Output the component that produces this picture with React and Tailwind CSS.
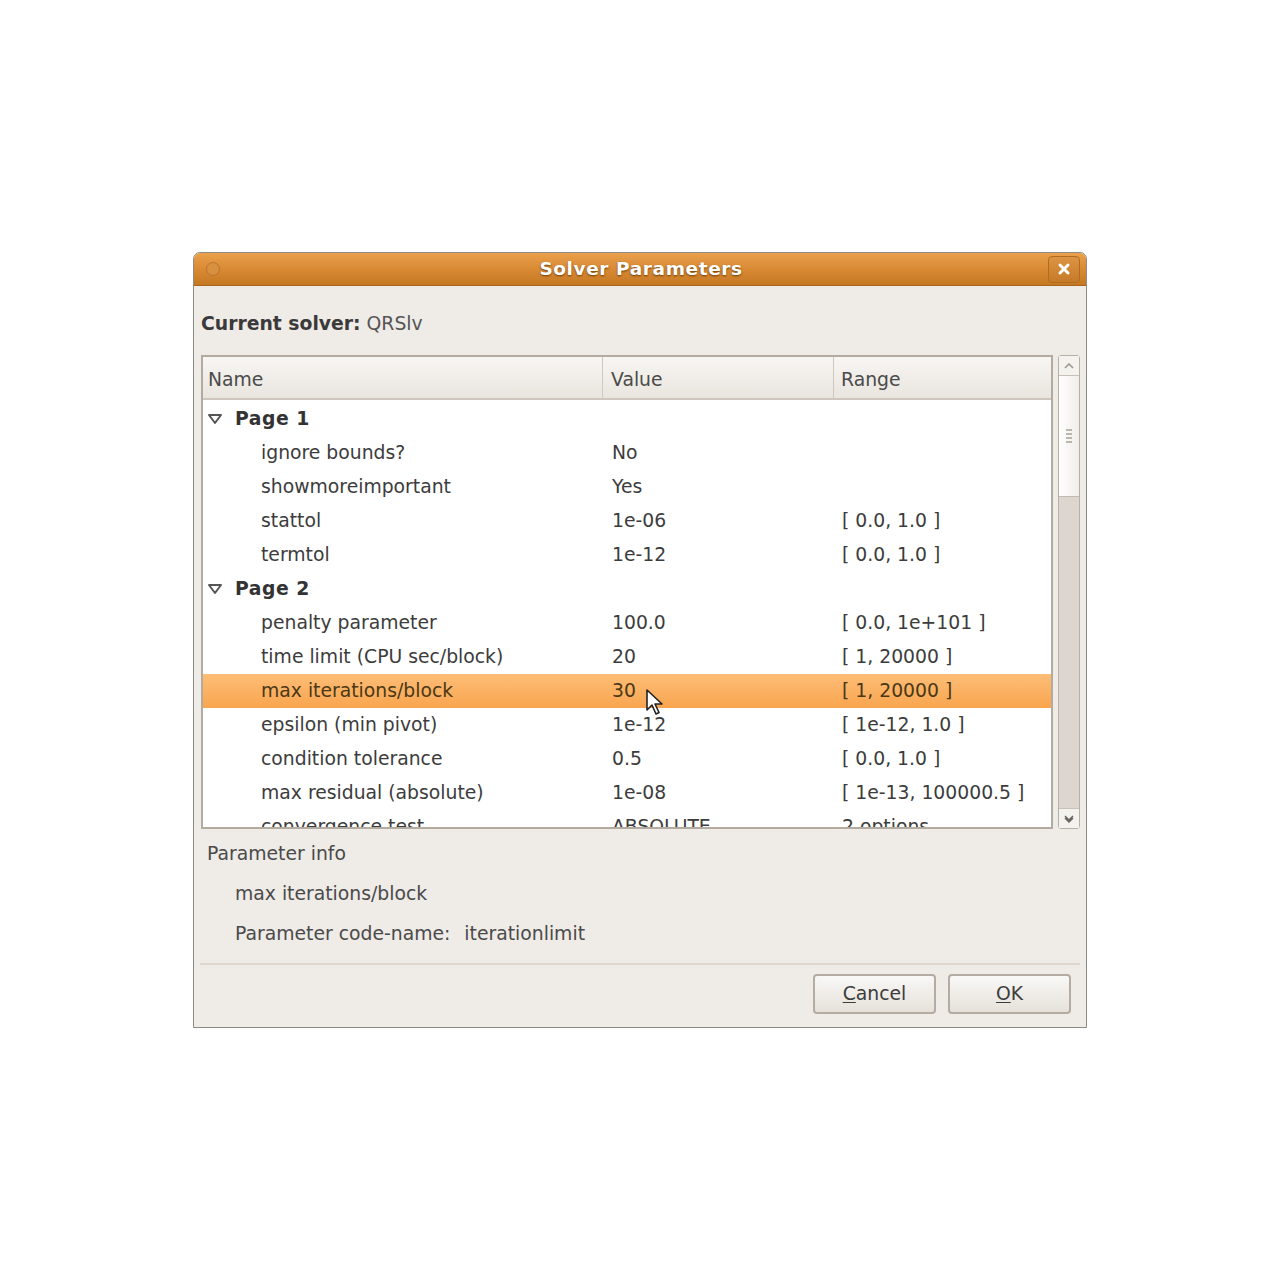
import React from "react";

const font = { fontFamily: '"DejaVu Sans", "Liberation Sans", sans-serif' };

const rows = [
  { group: "Page 1" },
  { name: "ignore bounds?", value: "No", range: "" },
  { name: "showmoreimportant", value: "Yes", range: "" },
  { name: "stattol", value: "1e-06", range: "[ 0.0, 1.0 ]" },
  { name: "termtol", value: "1e-12", range: "[ 0.0, 1.0 ]" },
  { group: "Page 2" },
  { name: "penalty parameter", value: "100.0", range: "[ 0.0, 1e+101 ]" },
  { name: "time limit (CPU sec/block)", value: "20", range: "[ 1, 20000 ]" },
  { name: "max iterations/block", value: "30", range: "[ 1, 20000 ]", selected: true },
  { name: "epsilon (min pivot)", value: "1e-12", range: "[ 1e-12, 1.0 ]" },
  { name: "condition tolerance", value: "0.5", range: "[ 0.0, 1.0 ]" },
  { name: "max residual (absolute)", value: "1e-08", range: "[ 1e-13, 100000.5 ]" },
  { name: "convergence test", value: "ABSOLUTE", range: "2 options" },
];

const Triangle = () => (
  <svg width="16" height="12" viewBox="0 0 16 12" className="mr-[12px]">
    <path d="M2 2 L14 2 L8 10 Z" fill="none" stroke="#555" strokeWidth="2" strokeLinejoin="round" />
  </svg>
);

const Row = ({ row }) => {
  if (row.group) {
    return (
      <div className="h-[34px] flex items-center pl-[4px] text-[#333] font-bold text-[18.8px]">
        <Triangle />
        <span className="tracking-[0.5px]">{row.group}</span>
      </div>
    );
  }
  return (
    <div
      className={
        row.selected
          ? "h-[34px] flex items-center bg-gradient-to-b from-[#fdbd76] to-[#f9a54e] text-[#4a3816]"
          : "h-[34px] flex items-center text-[#3c3c3c]"
      }
    >
      <div className="w-[400px] pl-[58px] whitespace-nowrap">{row.name}</div>
      <div className="w-[231px] pl-[9px] whitespace-nowrap">{row.value}</div>
      <div className="flex-1 pl-[8px] whitespace-nowrap">{row.range}</div>
    </div>
  );
};

const Cursor = () => (
  <svg width="22" height="28" viewBox="0 0 22 28" className="absolute left-[442px] top-[331px]">
    <path d="M2 2 L2 22 L7 17 L11 26 L14 24.5 L10 16 L17 16 Z" fill="#fff" stroke="#222" strokeWidth="1.6" strokeLinejoin="round" />
  </svg>
);

export default function App() {
  return (
    <div className="w-[1280px] h-[1280px] bg-white pt-[252px] pl-[193px]" style={font}>
      <div className="w-[894px] h-[776px] flex flex-col bg-[#efebe7] border border-[#8d8a85] rounded-t-[7px] overflow-hidden">
        {/* title bar */}
        <div className="h-[33px] flex items-center bg-gradient-to-b from-[#eaa04c] via-[#d98a33] to-[#c57822] px-[12px] border-b border-[#a9651c]">
          <div className="w-[14px] h-[14px] rounded-full border border-[#b87430] bg-[#d9903e]" />
          <div className="flex-1 text-center text-white font-bold text-[18.5px] tracking-[0.6px] pl-[14px] [text-shadow:0_1px_2px_#6b3c0a]">
            Solver Parameters
          </div>
          <div className="w-[32px] h-[27px] rounded-[4px] border border-[#b06b22] bg-gradient-to-b from-[#dd9442] to-[#c57a28] flex items-center justify-center -mr-[6px]">
            <svg width="14" height="14" viewBox="0 0 14 14">
              <path d="M3 3 L11 11 M11 3 L3 11" stroke="#fff" strokeWidth="3" strokeLinecap="round" />
            </svg>
          </div>
        </div>

        {/* body */}
        <div className="flex-1 flex flex-col text-[18.8px]">
          <div className="pt-[24px] pl-[7px] h-[69px] text-[#3a3a3a]">
            <span className="font-bold">Current solver:</span> <span className="text-[#555]">QRSlv</span>
          </div>

          <div className="flex pl-[7px] pr-[6px]">
            <div className="relative w-[852px] h-[474px] border-2 border-[#b3aaa0] bg-white flex flex-col overflow-hidden">
              <div className="h-[43px] flex items-center bg-gradient-to-b from-[#f8f6f3] to-[#e9e5df] border-b-2 border-[#cfc7bd] text-[#4a4a4a] shrink-0">
                <div className="w-[400px] pl-[5px] pt-[6px] h-full flex items-center border-r border-[#cfc8c0]">Name</div>
                <div className="w-[231px] pl-[8px] pt-[6px] h-full flex items-center border-r border-[#cfc8c0]">Value</div>
                <div className="flex-1 pl-[7px] pt-[6px] h-full flex items-center">Range</div>
              </div>
              <div className="flex flex-col pt-[2px]">
                {rows.map((r, i) => (
                  <Row key={i} row={r} />
                ))}
              </div>
              <Cursor />
            </div>

            <div className="ml-[5px] w-[22px] h-[474px] flex flex-col border border-[#b8b0a6] rounded-[3px] bg-[#dcd6cf]">
              <div className="h-[20px] flex items-center justify-center bg-[#f4f2ef] border-b border-[#c8c0b6]">
                <svg width="10" height="6" viewBox="0 0 10 6">
                  <path d="M1 5 L5 1 L9 5" fill="none" stroke="#9a948c" strokeWidth="1.5" />
                </svg>
              </div>
              <div className="h-[121px] bg-gradient-to-r from-[#ffffff] to-[#f1eeea] border-b border-[#c2bab0] flex items-center justify-center">
                <div className="flex flex-col gap-[2px]">
                  <div className="w-[6px] h-[2px] bg-[#bdb6ad]" />
                  <div className="w-[6px] h-[2px] bg-[#bdb6ad]" />
                  <div className="w-[6px] h-[2px] bg-[#bdb6ad]" />
                  <div className="w-[6px] h-[2px] bg-[#bdb6ad]" />
                </div>
              </div>
              <div className="flex-1" />
              <div className="h-[20px] flex items-center justify-center bg-[#f4f2ef] border-t border-[#c8c0b6]">
                <svg width="10" height="8" viewBox="0 0 10 8">
                  <path d="M1 1 L5 5 L9 1 M1 3 L5 7 L9 3" fill="none" stroke="#6a655f" strokeWidth="1.5" />
                </svg>
              </div>
            </div>
          </div>

          <div className="pl-[13px] pt-[14px] text-[#4a4a4a] leading-[22px]">
            <div>Parameter info</div>
            <div className="pl-[28px] pt-[18px]">max iterations/block</div>
            <div className="pl-[28px] pt-[18px]">
              Parameter code-name:<span className="ml-[14px]">iterationlimit</span>
            </div>
          </div>

          <div className="mt-[18px] mx-[6px] border-t-2 border-[#ddd7d0]" />

          <div className="flex justify-end gap-[12px] pr-[15px] pt-[9px]">
            <button className="w-[123px] h-[40px] rounded-[4px] border-2 border-[#b4aca2] bg-gradient-to-b from-[#f9f8f6] to-[#e6e1da] text-[#3c3c3c] text-[18.8px]">
              <span className="underline underline-offset-2">C</span>ancel
            </button>
            <button className="w-[123px] h-[40px] rounded-[4px] border-2 border-[#b4aca2] bg-gradient-to-b from-[#f9f8f6] to-[#e6e1da] text-[#3c3c3c] text-[18.8px]">
              <span className="underline underline-offset-2">O</span>K
            </button>
          </div>
        </div>
      </div>
    </div>
  );
}
